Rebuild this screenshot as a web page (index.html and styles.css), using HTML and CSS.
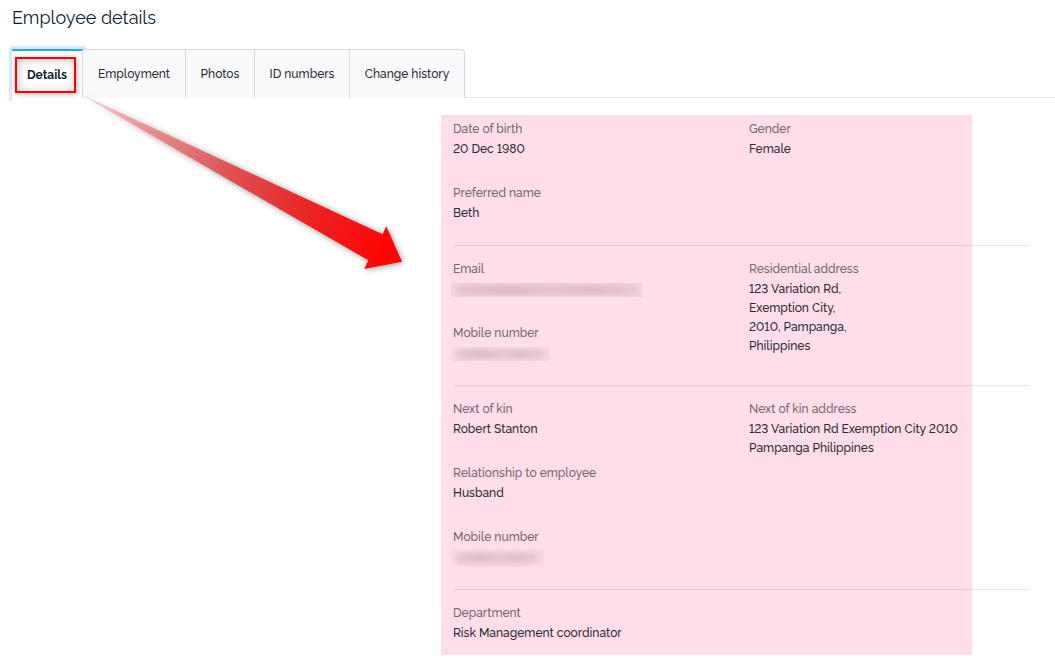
FILE: index.html
```html
<!DOCTYPE html>
<html lang="en">
<head>
<meta charset="utf-8">
<meta name="viewport" content="width=device-width, initial-scale=1">
<title>Employee details</title>
<link rel="stylesheet" href="styles.css">
</head>
<body>
<h1 class="title">Employee details</h1>
<nav class="tabs" role="tablist" aria-label="Employee details">
  <button class="tab tab-active" type="button" role="tab" aria-selected="true">Details</button>
  <button class="tab" type="button" role="tab" aria-selected="false">Employment</button>
  <button class="tab" type="button" role="tab" aria-selected="false">Photos</button>
  <button class="tab" type="button" role="tab" aria-selected="false">ID numbers</button>
  <button class="tab tab-last" type="button" role="tab" aria-selected="false">Change history</button>
  <span class="tabs-rule"></span>
</nav>
<svg class="arrow" width="350" height="200" viewBox="70 85 350 200" aria-hidden="true">
  <defs>
    <linearGradient id="fade" gradientUnits="userSpaceOnUse" x1="80" y1="94" x2="385" y2="252">
      <stop offset="0" stop-color="#ff8080" stop-opacity="0.3"/>
      <stop offset="0.25" stop-color="#eb7c7c" stop-opacity="0.8"/>
      <stop offset="0.5" stop-color="#de5050"/>
      <stop offset="0.75" stop-color="#eb2424"/>
      <stop offset="1" stop-color="#ff0404"/>
    </linearGradient>
    <filter id="shade" x="-10%" y="-10%" width="120%" height="125%" color-interpolation-filters="sRGB">
      <feDropShadow dx="1" dy="1" stdDeviation="3" flood-color="#000" flood-opacity="0.4"/>
    </filter>
  </defs>
  <path d="M80 94 L382.7 234.3 L386.3 226.3 L402 261.7 L364.3 269 L368.3 260.3 Z" fill="url(#fade)" filter="url(#shade)"/>
</svg>
<main class="content">
  <div class="panel">
    <section class="group">
      <dl class="column">
        <div class="field"><dt>Date of birth</dt><dd>20 Dec 1980</dd></div>
        <div class="field"><dt>Preferred name</dt><dd>Beth</dd></div>
      </dl>
      <dl class="column">
        <div class="field"><dt>Gender</dt><dd>Female</dd></div>
      </dl>
    </section>
    <section class="group">
      <dl class="column">
        <div class="field"><dt>Email</dt><dd class="hidden-value"><span class="smudge smudge-email"></span></dd></div>
        <div class="field"><dt>Mobile number</dt><dd class="hidden-value"><span class="smudge smudge-mobile"></span></dd></div>
      </dl>
      <dl class="column">
        <div class="field"><dt>Residential address</dt><dd>123 Variation Rd,<br>Exemption City,<br>2010, Pampanga,<br>Philippines</dd></div>
      </dl>
    </section>
    <section class="group">
      <dl class="column">
        <div class="field"><dt>Next of kin</dt><dd>Robert Stanton</dd></div>
        <div class="field"><dt>Relationship to employee</dt><dd>Husband</dd></div>
        <div class="field"><dt>Mobile number</dt><dd class="hidden-value"><span class="smudge smudge-kin"></span></dd></div>
      </dl>
      <dl class="column">
        <div class="field"><dt>Next of kin address</dt><dd>123 Variation Rd Exemption City 2010<br>Pampanga Philippines</dd></div>
      </dl>
    </section>
    <section class="group">
      <dl class="column">
        <div class="field"><dt>Department</dt><dd>Risk Management coordinator</dd></div>
      </dl>
    </section>
  </div>
</main>
</body>
</html>
```
FILE: styles.css
```css
* { box-sizing: border-box; }

body {
  margin: 0;
  position: relative;
  background: #fff;
  color: #2c2c36;
  font-family: Raleway, Lato, sans-serif;
  font-size: 12px;
  font-weight: 500;
  font-variant-numeric: lining-nums;
  line-height: 19px;
}

.title {
  margin: 0;
  padding: 6px 12px 0;
  color: #0c2233;
  font-size: 18px;
  font-weight: 400;
  line-height: 24px;
}

.tabs {
  display: grid;
  grid-template-columns: 71px 103px 69px 95px 115px 1fr;
  height: 49px;
  margin: 19px 0 0 12px;
}

.tab {
  padding: 0;
  border: 0;
  border-top: 1px solid #d8dae0;
  border-right: 1px solid #d8dae0;
  background: #f9f9fc;
  color: #2c2c36;
  font: inherit;
  white-space: nowrap;
  cursor: pointer;
}

.tab-active {
  position: relative;
  padding-top: 2px;
  border-top: 2px solid #22a7ff;
  background: #fff;
  color: #0c2233;
  font-weight: 700;
}

/* focus ring along the top and left edges */
.tab-active::before {
  content: "";
  position: absolute;
  inset: -5px -4px -3px -3px;
  border-top: 3px solid #d9e7fb;
  border-left: 3px solid #d9e7fb;
  border-top-left-radius: 4px;
}

.tab-active::after {
  content: "";
  position: absolute;
  inset: 6px 6px 5px 3px;
  border: 2px solid #f00;
  box-shadow: 1px 1px 5px rgba(0, 0, 0, 0.3), inset 1px 1px 8px rgba(0, 0, 0, 0.25);
}

.tab-last { border-top-right-radius: 4px; }

.tabs-rule { border-bottom: 1px solid #e2e3e6; }

.arrow {
  position: absolute;
  left: 70px;
  top: 85px;
  pointer-events: none;
}

.content {
  display: flex;
  justify-content: flex-end;
  padding: 17px 26px 15px;
}

.panel {
  position: relative;
  z-index: 0;
  width: 576px;
  padding: 4px 0 12px;
}

.panel::before {
  content: "";
  position: absolute;
  z-index: -1;
  inset: 0 57px 0 -12px;
  background: #ffdee9;
}

.group {
  display: grid;
  grid-template-columns: 1fr 1fr;
  column-gap: 16px;
}

.group + .group {
  margin-top: 22px;
  padding-top: 13px;
  border-top: 1px solid rgba(40, 40, 50, 0.1);
}

.column {
  display: flex;
  flex-direction: column;
  gap: 24px;
  margin: 0;
}

dt {
  color: #75686f;
  line-height: 21px;
}

dd { margin: 0; }

.hidden-value {
  display: flex;
  align-items: center;
  height: 19px;
  margin-left: -2px;
}

.smudge {
  height: 14px;
  overflow: hidden;
  background: #f3d3dd;
}

.smudge::before {
  content: "";
  display: block;
  height: 8px;
  margin: 3px 6px;
  background: linear-gradient(90deg, #dcc0ca, #d2b7c1 30%, #dcc0ca 52%, #d4b9c4 75%, #dfc4ce);
  filter: blur(3px);
}

.smudge-email { width: 191px; }
.smudge-mobile { width: 99px; background: #f8d9e3; }
.smudge-kin { width: 93px; height: 18px; background: #f8d9e3; }
.smudge-kin::before { margin-top: 5px; }
```
